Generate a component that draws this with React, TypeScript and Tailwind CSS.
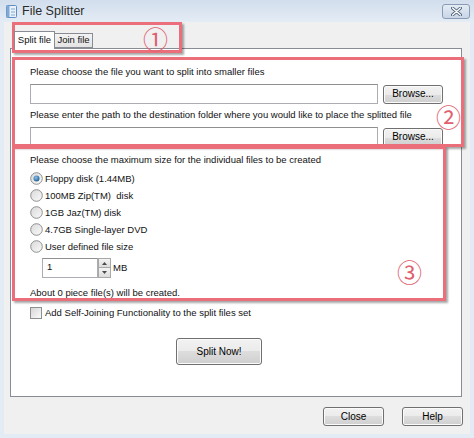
import React from "react";

const FONT = "font-['Liberation_Sans',Arial,sans-serif]";

function WinButton({
  label,
  className = "",
}: {
  label: string;
  className?: string;
}) {
  return (
    <div
      className={`flex items-center justify-center rounded-[3px] border border-[#707070] bg-[linear-gradient(#f2f2f2_0%,#ebebeb_50%,#dddddd_50%,#cfcfcf_100%)] text-[10px] text-black shadow-[inset_0_0_0_1px_#fbfbfb] ${className}`}
    >
      {label}
    </div>
  );
}

function Radio({ checked = false, id }: { checked?: boolean; id: string }) {
  return (
    <svg width="13" height="13" viewBox="0 0 13 13" className="shrink-0">
      <defs>
        <linearGradient id={`rf-${id}`} x1="0" y1="0" x2="1" y2="1">
          <stop offset="0" stopColor="#d8d8d8" />
          <stop offset="1" stopColor="#fbfbfb" />
        </linearGradient>
        <radialGradient id={`rd-${id}`} cx="0.4" cy="0.35" r="0.7">
          <stop offset="0" stopColor="#8ac2ee" />
          <stop offset="1" stopColor="#1b5a8c" />
        </radialGradient>
      </defs>
      <circle cx="6.5" cy="6.5" r="5.8" fill={`url(#rf-${id})`} stroke="#8e8f8f" strokeWidth="1" />
      {checked && <circle cx="6.5" cy="6.5" r="3" fill={`url(#rd-${id})`} />}
    </svg>
  );
}

function RadioRow({ label, checked, id }: { label: string; checked?: boolean; id: string }) {
  return (
    <div className="flex h-[17px] items-center gap-[2px]">
      <Radio checked={checked} id={id} />
      <span className="whitespace-pre">{label}</span>
    </div>
  );
}

function TextBox({ className = "" }: { className?: string }) {
  return (
    <div
      className={`h-[20px] border border-[#abadb3] border-t-[#8e8f8f] bg-white ${className}`}
    />
  );
}

function AppIcon() {
  return (
    <svg width="13" height="15" viewBox="0 0 13 15">
      <rect x="1.5" y="1.5" width="10" height="12" rx="1" fill="#e9f1fa" stroke="#5f8dc0" />
      <rect x="1.5" y="1.5" width="3" height="12" fill="#7fa9d6" />
      <line x1="6" y1="5" x2="10" y2="5" stroke="#7fa9d6" />
      <line x1="6" y1="8" x2="10" y2="8" stroke="#7fa9d6" />
      <line x1="6" y1="11" x2="10" y2="11" stroke="#7fa9d6" />
    </svg>
  );
}

function CloseX() {
  return (
    <div className="flex h-[15px] w-[28px] items-center justify-center rounded-[3px] border border-[#8a9cb5] bg-[linear-gradient(#e4ebf4,#c9d6e6)]">
      <svg width="11" height="9" viewBox="0 0 11 9">
        <path d="M1.5 1 L9.5 8 M9.5 1 L1.5 8" stroke="#4b5f78" strokeWidth="3" strokeLinecap="round" />
        <path d="M1.5 1 L9.5 8 M9.5 1 L1.5 8" stroke="#ffffff" strokeWidth="1.4" strokeLinecap="round" />
      </svg>
    </div>
  );
}

function Spinner() {
  return (
    <div className="ml-[12px] flex h-[20px] items-center">
      <div className="h-[20px] w-[56px] border border-[#abadb3] border-t-[#8e8f8f] bg-white pl-[4px] pt-[2px] leading-[12px]">
        1
      </div>
      <div className="flex h-[20px] w-[13px] flex-col">
        <div className="flex h-[10px] items-center justify-center border border-[#a8a8a8] bg-[linear-gradient(#f4f4f4,#dcdcdc)]">
          <svg width="5" height="3" viewBox="0 0 5 3">
            <path d="M0 3 L2.5 0 L5 3 Z" fill="#4a4a4a" />
          </svg>
        </div>
        <div className="flex h-[10px] items-center justify-center border border-t-0 border-[#a8a8a8] bg-[linear-gradient(#f4f4f4,#dcdcdc)]">
          <svg width="5" height="3" viewBox="0 0 5 3">
            <path d="M0 0 L2.5 3 L5 0 Z" fill="#4a4a4a" />
          </svg>
        </div>
      </div>
      <span className="ml-[2px]">MB</span>
    </div>
  );
}

function Checkbox() {
  return (
    <div className="h-[12px] w-[12px] shrink-0 border border-[#8e8f8f] bg-[linear-gradient(135deg,#d6d6d6,#fbfbfb)]" />
  );
}

function Annotation({ className }: { className: string }) {
  return (
    <div
      className={`pointer-events-none absolute border-[3px] border-[#ea6f7b] shadow-[2px_2px_2px_rgba(0,0,0,0.35)] ${className}`}
    />
  );
}

function Circled({ text, className }: { text: string; className: string }) {
  return (
    <span
      className={`pointer-events-none absolute font-['Noto_Sans_CJK_JP',sans-serif] text-[25px] leading-none text-[#e0606e] ${className}`}
    >
      {text}
    </span>
  );
}

export default function App() {
  return (
    <div
      className={`relative h-[438px] w-[474px] overflow-hidden bg-[#e3ebf4] ${FONT} text-[9.5px] text-[#111]`}
    >
      {/* title bar */}
      <div className="flex h-[22px] items-center bg-[linear-gradient(#d2deed,#e4ecf5)] pl-[5px] pr-[4px]">
        <AppIcon />
        <span className="ml-[4px] text-[12.5px] text-[#2b2b2b]">File Splitter</span>
        <div className="ml-auto">
          <CloseX />
        </div>
      </div>

      {/* client area */}
      <div className="mx-[4px] h-[412px] bg-[#f0f0f0] pl-[6px]">
        {/* tabs */}
        <div className="flex h-[26px] items-end pl-[4px]">
          <div className="relative z-10 mb-[-1px] flex h-[18px] w-[41px] items-center justify-center border border-b-0 border-[#898c95] bg-white">
            Split file
          </div>
          <div className="flex h-[15px] w-[38px] items-center justify-center border border-l-0 border-[#898c95] bg-[linear-gradient(#f3f3f3,#e3e3e3)]">
            Join file
          </div>
        </div>

        {/* panel */}
        <div className="flex h-[349px] w-[452px] flex-col border border-[#898c95] bg-white pl-[19px] pt-[17px] leading-[12px]">
          <div>Please choose the file you want to split into smaller files</div>
          <div className="mt-[6px] flex items-center gap-[5px]">
            <TextBox className="w-[348px]" />
            <WinButton label="Browse..." className="h-[19px] w-[60px]" />
          </div>
          <div className="mt-[5px]">
            Please enter the path to the destination folder where you would like to place the splitted file
          </div>
          <div className="mt-[6px] flex items-center gap-[5px]">
            <TextBox className="w-[348px]" />
            <WinButton label="Browse..." className="h-[19px] w-[60px]" />
          </div>
          <div className="mt-[7px]">
            Please choose the maximum size for the individual files to be created
          </div>
          <div className="mt-[4px] flex flex-col">
            <RadioRow id="r1" label="Floppy disk (1.44MB)" checked />
            <RadioRow id="r2" label="100MB Zip(TM)  disk" />
            <RadioRow id="r3" label="1GB Jaz(TM) disk" />
            <RadioRow id="r4" label="4.7GB Single-layer DVD" />
            <RadioRow id="r5" label="User defined file size" />
          </div>
          <div className="mt-[3px]">
            <Spinner />
          </div>
          <div className="mt-[9px]">About 0 piece file(s) will be created.</div>
          <div className="mt-[8px] flex items-center gap-[3px]">
            <Checkbox />
            <span>Add Self-Joining Functionality to the split files set</span>
          </div>
          <WinButton
            label="Split Now!"
            className="ml-[146px] mt-[19px] h-[27px] w-[86px]"
          />
        </div>

        {/* bottom buttons */}
        <div className="mt-[10px] flex gap-[18px] pl-[313px]">
          <WinButton label="Close" className="h-[19px] w-[61px]" />
          <WinButton label="Help" className="h-[19px] w-[61px]" />
        </div>
      </div>

      {/* annotations */}
      <Annotation className="left-[12px] top-[22px] h-[31px] w-[170px]" />
      <Annotation className="left-[12px] top-[57px] h-[90px] w-[452px]" />
      <Annotation className="left-[12px] top-[146px] h-[155px] w-[434px]" />
      <Circled text="①" className="left-[143px] top-[26px]" />
      <Circled text="②" className="left-[436px] top-[104px]" />
      <Circled text="③" className="left-[397px] top-[259px]" />
    </div>
  );
}
